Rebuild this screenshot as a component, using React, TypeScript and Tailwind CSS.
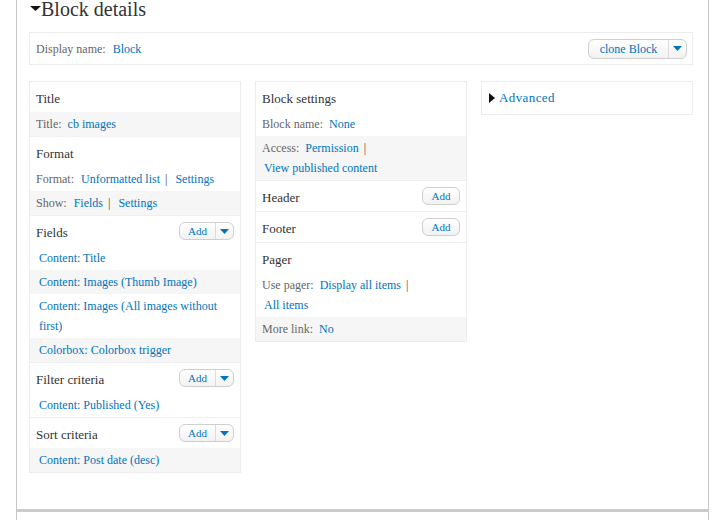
import React from "react";

const link = "text-[#0074bd]";
const label = "text-[#666]";

function Caret() {
  return (
    <svg width="9" height="5" viewBox="0 0 9 5" className="block">
      <path d="M0 0 L9 0 L4.5 5 Z" fill="#0074bd" />
    </svg>
  );
}

function AddButton({ split = true }: { split?: boolean }) {
  return (
    <div className="flex h-[18px] items-stretch rounded-[6px] border border-[#cfcfcf] bg-gradient-to-b from-white to-[#f2f2f2] text-[11px] leading-[16px] text-[#0074bd]">
      <span className={split ? "w-[35px] text-center" : "w-[36px] text-center"}>Add</span>
      {split && (
        <span className="flex w-[18px] items-center justify-center border-l border-[#dcdcdc]">
          <Caret />
        </span>
      )}
    </div>
  );
}

function Header({ title, button }: { title: string; button?: "split" | "plain" }) {
  return (
    <div className="flex h-[30px] items-center justify-between px-[6px] text-[13px] text-[#333]">
      <span className={button ? "pt-[4px]" : "pt-[3px]"}>{title}</span>
      {button && <AddButton split={button === "split"} />}
    </div>
  );
}

function Row({ gray, children, indent }: { gray?: boolean; children: React.ReactNode; indent?: boolean }) {
  return (
    <div className={`py-[2px] pr-[6px] leading-[20px] ${indent ? "pl-[9px]" : "pl-[6px]"} ${gray ? "bg-[#f6f6f6]" : ""}`}>
      {children}
    </div>
  );
}

function Section({ children, last }: { children: React.ReactNode; last?: boolean }) {
  return <div className={last ? "" : "border-b border-[#efefef]"}>{children}</div>;
}

const Sep = () => <span className="mx-[5px] text-[#444]">|</span>;

export default function App() {
  return (
    <div className="h-[520px] w-[720px] overflow-hidden bg-white font-['Liberation_Serif',serif] text-[12px]">
      <div className="ml-[16px] flex h-full w-[693px] flex-col border-x border-[#c8c8c8]">
        <div className="h-[492px] pl-[12px] pr-[15px]">
          {/* heading */}
          <div className="-mt-[3px] flex h-[24px] items-center text-[20px] leading-[20px] text-[#333]">
            <svg width="11" height="5" viewBox="0 0 11 5" className="ml-[1px] -mt-[2px]">
              <path d="M0 0 L11 0 L5.5 5 Z" fill="#111" />
            </svg>
            <span>Block details</span>
          </div>

          {/* display name */}
          <div className="mt-[11px] flex h-[33px] items-center justify-between border border-[#ececec] pl-[6px] pr-[5px]">
            <div>
              <span className={label}>Display name:</span>
              <span className={`ml-[7px] ${link}`}>Block</span>
            </div>
            <div className="flex h-[20px] items-stretch rounded-[6px] border border-[#cfcfcf] bg-gradient-to-b from-white to-[#f2f2f2] text-[12px] leading-[18px] text-[#0074bd]">
              <span className="w-[79px] text-center">clone Block</span>
              <span className="flex w-[18px] items-center justify-center border-l border-[#dcdcdc]">
                <Caret />
              </span>
            </div>
          </div>

          {/* columns */}
          <div className="mt-[16px] grid grid-cols-3 items-start gap-[14px]">
            {/* left */}
            <div className="border border-[#ececec]">
              <Section>
                <Header title="Title" />
                <Row gray>
                  <span className={label}>Title:</span>
                  <span className={`ml-[6px] ${link}`}>cb images</span>
                </Row>
              </Section>
              <Section>
                <Header title="Format" />
                <Row>
                  <span className={label}>Format:</span>
                  <span className={`ml-[7px] ${link}`}>Unformatted list</span>
                  <Sep />
                  <span className={`ml-[3px] ${link}`}>Settings</span>
                </Row>
                <Row gray>
                  <span className={label}>Show:</span>
                  <span className={`ml-[7px] ${link}`}>Fields</span>
                  <Sep />
                  <span className={`ml-[3px] ${link}`}>Settings</span>
                </Row>
              </Section>
              <Section>
                <Header title="Fields" button="split" />
                <Row indent>
                  <span className={link}>Content: Title</span>
                </Row>
                <Row indent gray>
                  <span className={link}>Content: Images (Thumb Image)</span>
                </Row>
                <Row indent>
                  <span className={link}>Content: Images (All images without first)</span>
                </Row>
                <Row indent gray>
                  <span className={link}>Colorbox: Colorbox trigger</span>
                </Row>
              </Section>
              <Section>
                <Header title="Filter criteria" button="split" />
                <Row indent>
                  <span className={link}>Content: Published (Yes)</span>
                </Row>
              </Section>
              <Section last>
                <Header title="Sort criteria" button="split" />
                <Row indent gray>
                  <span className={link}>Content: Post date (desc)</span>
                </Row>
              </Section>
            </div>

            {/* middle */}
            <div className="border border-[#ececec]">
              <Section>
                <Header title="Block settings" />
                <Row>
                  <span className={label}>Block name:</span>
                  <span className={`ml-[6px] ${link}`}>None</span>
                </Row>
                <Row gray>
                  <span className={label}>Access:</span>
                  <span className={`ml-[6px] ${link}`}>Permission</span>
                  <Sep />
                  <span className={`block pl-[2px] ${link}`}>View published content</span>
                </Row>
              </Section>
              <Section>
                <Header title="Header" button="plain" />
              </Section>
              <Section>
                <Header title="Footer" button="plain" />
              </Section>
              <Section last>
                <Header title="Pager" />
                <Row>
                  <span className={label}>Use pager:</span>
                  <span className={`ml-[6px] ${link}`}>Display all items</span>
                  <Sep />
                  <span className={`block pl-[2px] ${link}`}>All items</span>
                </Row>
                <Row gray>
                  <span className={label}>More link:</span>
                  <span className={`ml-[6px] ${link}`}>No</span>
                </Row>
              </Section>
            </div>

            {/* right */}
            <div className="flex h-[34px] items-center border border-[#ececec] pl-[7px]">
              <svg width="6" height="10" viewBox="0 0 6 10" className="mr-[4px]">
                <path d="M0 0 L6 5 L0 10 Z" fill="#111" />
              </svg>
              <span className={`text-[13px] tracking-[0.4px] ${link}`}>Advanced</span>
            </div>
          </div>
        </div>
        <div className="mt-[17px] h-[3px] bg-[#cccccc]" />
      </div>
    </div>
  );
}
